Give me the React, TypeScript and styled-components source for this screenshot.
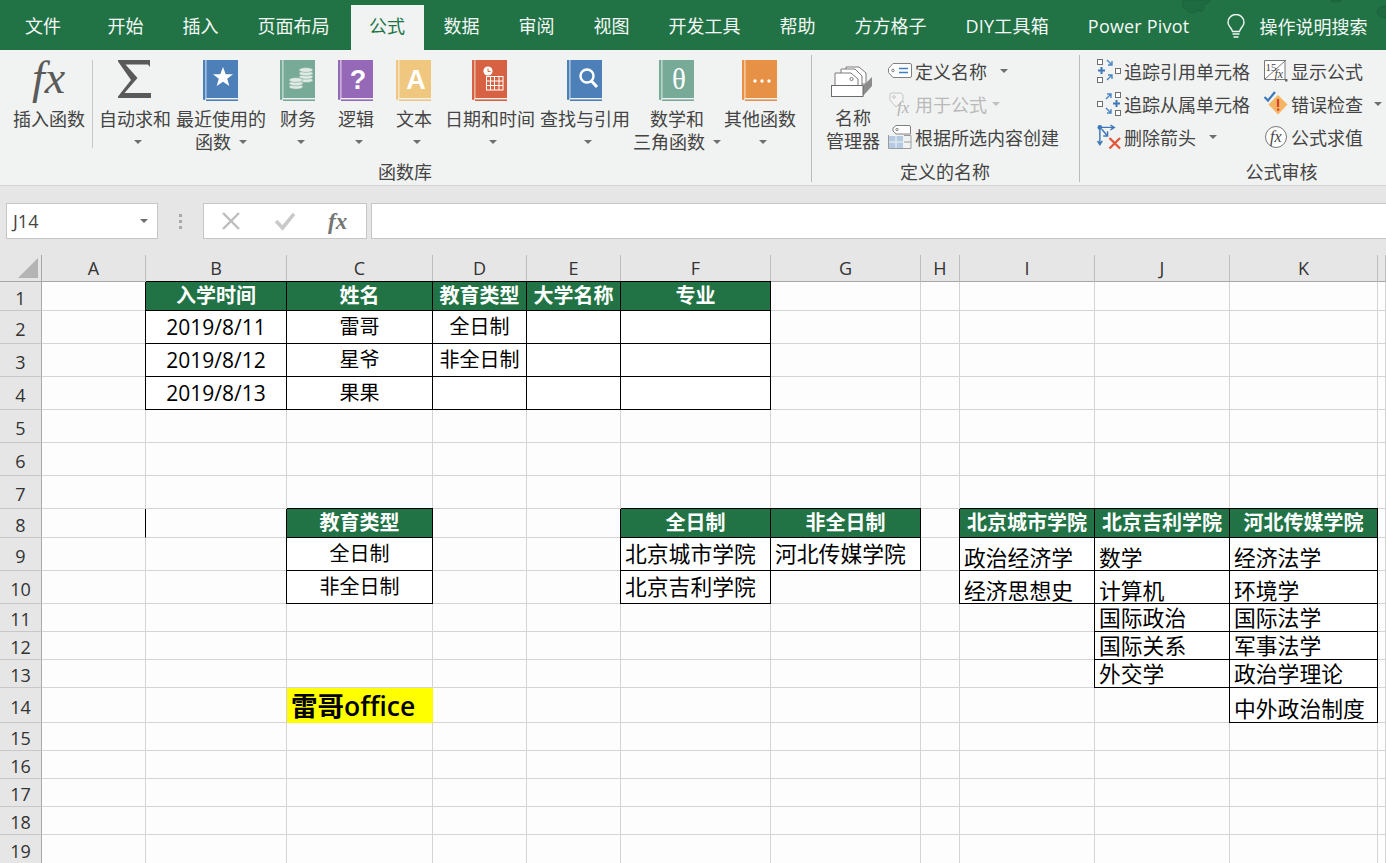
import React from "react";
import styled, { createGlobalStyle } from "styled-components";

const FONT = `"Open Sans", "Noto Sans CJK SC", sans-serif`;
const CJK = `"Noto Sans CJK SC", sans-serif`;
const GREEN = "#217346";

const GlobalStyle = createGlobalStyle`
  html, body { margin: 0; padding: 0; background: #e6e6e6; }
  body { font-family: ${FONT}; }
`;

const Page = styled.div`
  width: 1386px;
  height: 863px;
  overflow: hidden;
  display: flex;
  flex-direction: column;
  position: relative;
`;

/* tabs */
const TabBar = styled.div`
  height: 50px;
  background: ${GREEN};
  display: flex;
  align-items: flex-end;
  position: relative;
  flex: none;
`;

const Tab = styled.div<{ $active?: boolean; $first?: boolean; $spaced?: boolean }>`
  height: 45px;
  line-height: 43px;
  font-size: 18px;
  white-space: nowrap;
  color: ${(p) => (p.$active ? GREEN : "#f4f8f5")};
  background: ${(p) => (p.$active ? "#f1f3f2" : "transparent")};
  padding: ${(p) => (p.$first ? "0 27px 0 25px" : p.$active ? "0 19px 0 18px" : "0 19.5px")};
  margin-left: ${(p) => (p.$active ? "2px" : "0")};
  letter-spacing: ${(p) => (p.$spaced ? "0.2px" : "0")};
`;

const SearchHint = styled.div`
  height: 45px;
  box-sizing: border-box;
  padding-bottom: 3px;
  margin-left: 18.5px;
  display: flex;
  align-items: center;
  gap: 14px;
  font-size: 18px;
  color: #f4f8f5;
  white-space: nowrap;
`;

const Clover = styled.svg`
  position: absolute;
  top: 0;
  right: 0;
`;

/* ribbon */
const Ribbon = styled.div`
  height: 136px;
  flex: none;
  display: flex;
  background: #f1f3f2;
  border-bottom: 1px solid #d4d4d4;
  box-sizing: border-box;
  color: #444;
  font-family: ${CJK};
`;

const Group = styled.div<{ $w: number; $last?: boolean }>`
  width: ${(p) => p.$w}px;
  flex: none;
  display: flex;
  flex-direction: column;
  justify-content: space-between;
  position: relative;
  box-sizing: border-box;
  &::after {
    content: "";
    display: ${(p) => (p.$last ? "none" : "block")};
    position: absolute;
    right: 0;
    top: 5px;
    bottom: 3px;
    width: 1px;
    background: #b9bcbb;
  }
`;

const GroupBody = styled.div<{ $pad?: number; $gap?: number }>`
  display: flex;
  padding-left: ${(p) => p.$pad ?? 0}px;
  gap: ${(p) => p.$gap ?? 0}px;
`;

const GroupLabel = styled.div`
  height: 24px;
  line-height: 24px;
  margin-bottom: 2px;
  padding-right: 2px;
  text-align: center;
  font-size: 18px;
  color: #444;
`;

const BigButton = styled.div<{ $w: number; $ml?: number }>`
  width: ${(p) => p.$w}px;
  margin-left: ${(p) => p.$ml ?? 0}px;
  flex: none;
  padding-top: 10px;
  display: flex;
  flex-direction: column;
  align-items: center;
`;

const IconSlot = styled.div<{ $top?: number }>`
  height: 41px;
  display: flex;
  justify-content: center;
  align-items: flex-start;
  padding-right: 2px;
  margin-top: ${(p) => p.$top ?? 0}px;
`;

const BigLabel = styled.div<{ $top?: number }>`
  margin-top: ${(p) => p.$top ?? 6}px;
  font-size: 18px;
  line-height: 23px;
  text-align: center;
  white-space: nowrap;
  display: flex;
  flex-direction: column;
  align-items: center;
  height: 46px;
`;

const LabelLine = styled.div`
  height: 23px;
  display: flex;
  align-items: center;
  gap: 6px;
`;

const Caret = styled.span<{ $ml?: number; $muted?: boolean }>`
  display: inline-block;
  flex: none;
  margin-left: ${(p) => p.$ml ?? 0}px;
  width: 0;
  height: 0;
  border-left: 4px solid transparent;
  border-right: 4px solid transparent;
  border-top: 4px solid ${(p) => (p.$muted ? "#c0c0c0" : "#6e6e6e")};
`;

const VRule = styled.div`
  width: 1px;
  height: 88px;
  margin-top: 10px;
  background: #c6c8c7;
  flex: none;
`;

const SmallColumn = styled.div<{ $ml?: number }>`
  margin-left: ${(p) => p.$ml ?? 0}px;
  padding-top: 4px;
  display: flex;
  flex-direction: column;
`;

const SmallRow = styled.div<{ $muted?: boolean }>`
  height: 33px;
  display: flex;
  align-items: center;
  font-size: 18px;
  white-space: nowrap;
  color: ${(p) => (p.$muted ? "#b9b9b9" : "#444")};
`;

const SmallIcon = styled.div`
  width: 24px;
  height: 28px;
  margin-right: 3px;
  display: flex;
  align-items: center;
  justify-content: center;
  flex: none;
`;

/* formula bar */
const FormulaBar = styled.div`
  height: 69px;
  flex: none;
  background: #e6e6e6;
  box-sizing: border-box;
  padding: 17px 0 0 6px;
  display: flex;
  align-items: flex-start;
`;

const barBox = `
  height: 36px;
  box-sizing: border-box;
  background: #fff;
  border: 1px solid #c6c6c6;
`;

const NameBox = styled.div`
  ${barBox}
  width: 152px;
  display: flex;
  align-items: center;
  justify-content: space-between;
  padding: 0 9px 0 6px;
  font-size: 18px;
  color: #444;
`;

const Grip = styled.div`
  width: 45px;
  height: 36px;
  display: flex;
  flex-direction: column;
  align-items: center;
  justify-content: center;
  gap: 3px;
  flex: none;
  span {
    width: 3px;
    height: 3px;
    background: #a9a9a9;
  }
`;

const FxBox = styled.div`
  ${barBox}
  width: 164px;
  display: flex;
  align-items: center;
  padding-left: 17px;
  gap: 34px;
  flex: none;
`;

const FormulaInput = styled.div`
  ${barBox}
  margin-left: 4px;
  flex: 1;
  border-right: none;
`;

const FxMark = styled.span`
  font-family: "Liberation Serif", serif;
  font-style: italic;
  font-weight: 700;
  font-size: 23px;
  line-height: 1;
  color: #757575;
  margin-left: -1px;
`;

/* sheet */
const COLS = [104, 141, 146, 94, 94, 150, 150, 39, 135, 135, 148, 8];
const ROWS = [29, 33, 33, 33, 33, 33, 33, 29, 33, 33, 28, 28, 28, 35, 28, 28, 28, 28, 29];
const COL_NAMES = ["A", "B", "C", "D", "E", "F", "G", "H", "I", "J", "K", ""];

const Sheet = styled.div`
  flex: 1;
  display: grid;
  grid-template-columns: 42px ${COLS.map((c) => `${c}px`).join(" ")};
  grid-template-rows: 27px ${ROWS.map((r) => `${r}px`).join(" ")};
  background: #fdfdfd;
  font-family: ${FONT};
`;

const Corner = styled.div`
  background: #e6e6e6;
  border-right: 1px solid #a8a8a8;
  border-bottom: 1px solid #a8a8a8;
  box-sizing: border-box;
  display: flex;
  align-items: flex-end;
  justify-content: flex-end;
  padding: 0 3px 3px 0;
`;

const ColHead = styled.div`
  background: #e6e6e6;
  border-right: 1px solid #bdbdbd;
  border-bottom: 1px solid #a8a8a8;
  box-sizing: border-box;
  display: flex;
  align-items: center;
  justify-content: center;
  font-size: 18px;
  color: #333;
`;

const RowHead = styled.div`
  background: #e6e6e6;
  border-right: 1px solid #a8a8a8;
  border-bottom: 1px solid #c8c8c8;
  box-sizing: border-box;
  display: flex;
  align-items: center;
  justify-content: center;
  padding-top: 3px;
  font-size: 18px;
  color: #333;
`;

type CellKind = "plain" | "head" | "box" | "mark";

const Cell = styled.div<{ $kind: CellKind; $left?: boolean; $low?: number; $size?: number; $edge?: boolean }>`
  box-sizing: border-box;
  min-width: 0;
  overflow: visible;
  white-space: nowrap;
  display: flex;
  align-items: center;
  justify-content: ${(p) => (p.$left ? "flex-start" : "center")};
  padding: ${(p) => (p.$low ?? 0) * 2}px 0 0 ${(p) => (p.$left ? 4 : 0)}px;
  font-size: ${(p) => p.$size ?? 20}px;
  line-height: 1;
  font-weight: ${(p) => (p.$kind === "head" || p.$kind === "mark" ? 700 : 400)};
  color: ${(p) => (p.$kind === "head" ? "#fff" : "#000")};
  background: ${(p) =>
    p.$kind === "head" ? GREEN : p.$kind === "mark" ? "#ffff00" : p.$kind === "box" ? "#fff" : "transparent"};
  border-right: 1px solid ${(p) => (p.$kind === "head" || p.$kind === "box" || p.$edge ? "#000" : p.$kind === "mark" ? "#ffff00" : "#d4d4d4")};
  border-bottom: 1px solid ${(p) => (p.$kind === "head" || p.$kind === "box" ? "#000" : p.$kind === "mark" ? "#ffff00" : "#d4d4d4")};
  box-shadow: ${(p) => (p.$kind === "head" || p.$kind === "box" ? "-1px 0 0 #000, 0 -1px 0 #000" : "none")};
`;

const DateText = styled.span`
  font-size: 21px;
`;

const Mark = styled.span`
  font-family: ${FONT};
  font-weight: 600;
  font-size: 26.5px;
`;

type CellDef = { t?: string; k?: CellKind; left?: boolean; low?: number; size?: number };

const head = (t: string): CellDef => ({ t, k: "head" });
const box = (t = ""): CellDef => ({ t, k: "box" });
const wide = (t: string, low = 0): CellDef => ({ t, k: "box", left: true, size: 21.8, low });

const CELLS: Record<string, CellDef> = {
  B1: head("入学时间"),
  C1: head("姓名"),
  D1: head("教育类型"),
  E1: head("大学名称"),
  F1: head("专业"),
  B2: box("2019/8/11"),
  C2: box("雷哥"),
  D2: box("全日制"),
  E2: box(),
  F2: box(),
  B3: box("2019/8/12"),
  C3: box("星爷"),
  D3: box("非全日制"),
  E3: box(),
  F3: box(),
  B4: box("2019/8/13"),
  C4: box("果果"),
  D4: box(),
  E4: box(),
  F4: box(),
  C8: head("教育类型"),
  C9: box("全日制"),
  C10: box("非全日制"),
  F8: head("全日制"),
  G8: head("非全日制"),
  F9: wide("北京城市学院"),
  G9: wide("河北传媒学院"),
  F10: wide("北京吉利学院"),
  I8: head("北京城市学院"),
  J8: head("北京吉利学院"),
  K8: head("河北传媒学院"),
  I9: wide("政治经济学", 4),
  I10: wide("经济思想史", 4),
  J9: wide("数学", 4),
  J10: wide("计算机", 4),
  J11: wide("国际政治"),
  J12: wide("国际关系"),
  J13: wide("外交学"),
  K9: wide("经济法学", 4),
  K10: wide("环境学", 4),
  K11: wide("国际法学"),
  K12: wide("军事法学"),
  K13: wide("政治学理论"),
  K14: wide("中外政治制度", 4),
};

/* icons */
const Book: React.FC<{ color: string; children?: React.ReactNode }> = ({ color, children }) => (
  <svg width="35" height="41" viewBox="0 0 35 41">
    <rect x="0" y="0" width="35" height="38" fill={color} />
    <rect x="0" y="0" width="2.4" height="40" rx="1" fill={color} />
    <rect x="2.4" y="0" width="1" height="38" fill="#fff" opacity="0.8" />
    <rect x="3" y="39.4" width="32" height="1.6" fill={color} />
    {children}
  </svg>
);

const Coins: React.FC<{ x: number; y: number; n: number }> = ({ x, y, n }) => (
  <g fill="#dfeae5" stroke="#7aa897" strokeWidth="0.6">
    {Array.from({ length: n }).map((_, i) => (
      <ellipse key={i} cx={x} cy={y + (n - 1 - i) * 3.4} rx="7" ry="2.4" />
    ))}
  </g>
);

const SigmaIcon = () => (
  <svg width="33" height="38" viewBox="0 0 33 38">
    <path d="M0 0H32V7L30 4.5H7.5L19.5 18L6.5 33H33V38H0V36.5L13 20L0 1.5Z" fill="#5a5a5a" />
  </svg>
);

const BigFx = () => (
  <svg width="38" height="44" viewBox="0 0 38 44" overflow="visible">
    <text x="3" y="33" fontFamily="Liberation Serif, serif" fontStyle="italic" fontSize="46" fill="#5a5a5a">
      fx
    </text>
  </svg>
);

const NameManagerIcon = () => (
  <svg width="42" height="31" viewBox="0 0 42 31">
    <g fill="#fff" stroke="#7a7a7a" strokeWidth="1">
      <path d="M15 1H28L35 7V18H15Z" />
      <path d="M10 3H24L31 10V20H10Z" />
      <path d="M4 7H20L27 13V20H4Z" />
    </g>
    <circle cx="20.5" cy="13" r="1.6" fill="#fff" stroke="#7a7a7a" />
    <path d="M32 20L41 11V20L32 30Z" fill="#8b8b8b" />
    <rect x="0.5" y="19.5" width="31.5" height="11" fill="#fff" stroke="#6b6b6b" />
  </svg>
);

const TagIcon = () => (
  <svg width="24" height="15" viewBox="0 0 24 15">
    <path d="M5 .5H22A1.5 1.5 0 0 1 23.5 2V13A1.5 1.5 0 0 1 22 14.5H5L.5 9.5V5.5Z" fill="#fff" stroke="#808080" />
    <circle cx="5" cy="7.5" r="1.3" fill="none" stroke="#808080" />
    <path d="M11 5.5H20M11 9.5H20" stroke="#3f7fc0" strokeWidth="1.3" />
  </svg>
);

const UseInFormulaIcon = () => (
  <svg width="24" height="24" viewBox="0 0 24 24">
    <path d="M3 1H13L15 3V8L8 15L2 8V2Z" fill="#f4f4f4" stroke="#c4c4c4" />
    <circle cx="6" cy="5" r="1.3" fill="none" stroke="#c4c4c4" />
    <text x="9" y="21" fontFamily="Liberation Serif, serif" fontStyle="italic" fontSize="17" fill="#b4b4b4">
      fx
    </text>
  </svg>
);

const CreateFromSelectionIcon = () => (
  <svg width="24" height="25" viewBox="0 0 24 25">
    <path d="M8 1.5H21A1.5 1.5 0 0 1 22.5 3V10H8L5 7V4Z" fill="#fff" stroke="#808080" />
    <circle cx="9" cy="5.5" r="1.2" fill="none" stroke="#808080" />
    <rect x="1" y="12" width="6.5" height="5.5" fill="#b5cbe3" />
    <rect x="1" y="18.5" width="6.5" height="5.5" fill="#b5cbe3" />
    <rect x="8.5" y="12" width="6.5" height="5.5" fill="#b5cbe3" />
    <rect x="8.5" y="18.5" width="6.5" height="5.5" fill="#b5cbe3" />
    <path d="M16 11.5H23V24.5H.5V11" fill="none" stroke="#9c9c9c" />
    <path d="M16 18H23" stroke="#9c9c9c" />
  </svg>
);

const Square: React.FC<{ x: number; y: number }> = ({ x, y }) => (
  <rect x={x + 0.5} y={y + 0.5} width="5" height="5" fill="#fff" stroke="#6f6f6f" />
);

const TracePrecedentsIcon: React.FC<{ flip?: boolean }> = ({ flip }) => (
  <svg width="24" height="24" viewBox="0 0 24 24">
    <g transform={flip ? "translate(24 0) scale(-1 1)" : undefined}>
      <Square x={0} y={0} />
      <Square x={0} y={18} />
      <Square x={18} y={9} />
      <path d="M4.5 8V15M1 11.5H8" stroke="#3f78b8" strokeWidth="2" />
      <g stroke="#4a86c5" strokeWidth="1.4" fill="none">
        <path d={flip ? "M15 7L10 2M10 6V2H14" : "M10 1L15 6M15 2V6H11"} />
        <path d={flip ? "M15 16L10 21M10 17V21H14" : "M10 21L15 16M11 16H15V20"} />
      </g>
    </g>
  </svg>
);

const RemoveArrowsIcon = () => (
  <svg width="25" height="26" viewBox="0 0 25 26">
    <circle cx="3" cy="3" r="2.5" fill="#3f78b8" />
    <g stroke="#3f78b8" strokeWidth="1.5" fill="none">
      <path d="M3 3H18M14 .5L18 3L14 5.5" />
      <path d="M3 4V21M.5 17L3 21L5.5 17" />
      <path d="M5 5L11 12M11 7V12H6.5" />
    </g>
    <path d="M13 14L24 25M24 14L13 25" stroke="#e0573a" strokeWidth="2.4" />
  </svg>
);

const ShowFormulaIcon = () => (
  <svg width="24" height="24" viewBox="0 0 24 24">
    <path d="M22 1.5H.5V20.5H21V2" fill="#fff" stroke="#777" />
    <path d="M1 20L21 2" stroke="#777" />
    <text x="1.5" y="11.5" fontFamily="Liberation Serif, serif" fontSize="11" fill="#444">
      15
    </text>
    <text x="10.5" y="19" fontFamily="Liberation Serif, serif" fontStyle="italic" fontSize="12" fill="#444">
      fx
    </text>
    <rect x="21" y="20" width="2.5" height="2.5" fill="#666" />
  </svg>
);

const ErrorCheckIcon = () => (
  <svg width="24" height="25" viewBox="0 0 24 25">
    <path d="M14 4L23.5 13.5L14 23.5L4.5 13.5Z" fill="#f3b562" />
    <path d="M0.5 6L4 9.5L11 1" fill="none" stroke="#3d78b8" strokeWidth="2.2" />
    <path d="M14 8V16" stroke="#d8432e" strokeWidth="2.2" />
    <rect x="13" y="17.5" width="2.2" height="2.2" fill="#d8432e" />
  </svg>
);

const EvaluateIcon = () => (
  <svg width="24" height="24" viewBox="0 0 24 24">
    <circle cx="12" cy="12" r="10.5" fill="#fff" stroke="#777" />
    <text x="6" y="17" fontFamily="Liberation Serif, serif" fontStyle="italic" fontSize="16" fill="#444">
      fx
    </text>
  </svg>
);

const BulbIcon = () => (
  <svg width="18" height="25" viewBox="0 0 18 25">
    <path
      d="M5.5 17.5C5 14 1 12.5 1 8.5A8 8 0 0 1 17 8.5C17 12.5 13 14 12.5 17.5Z"
      fill="none"
      stroke="#f4f8f5"
      strokeWidth="1.4"
    />
    <path d="M5.5 20H12.5M6.5 23H11.5" stroke="#f4f8f5" strokeWidth="1.6" />
  </svg>
);

const CancelIcon = () => (
  <svg width="20" height="20" viewBox="0 0 20 20">
    <path d="M2 2L18 18M18 2L2 18" stroke="#bdbdbd" strokeWidth="2.4" />
  </svg>
);

const ConfirmIcon = () => (
  <svg width="20" height="20" viewBox="0 0 20 20">
    <path d="M1 10L7.5 17L19 3" fill="none" stroke="#c9c9c9" strokeWidth="3.6" />
  </svg>
);

/* ribbon data */
const TABS = ["开始", "插入", "页面布局"];
const TABS_AFTER = ["数据", "审阅", "视图", "开发工具", "帮助", "方方格子"];
const TABS_LATIN = ["DIY工具箱", "Power Pivot"];

type Big = { w: number; ml?: number; icon: React.ReactNode; lines: string[] };

const LIBRARY: Big[] = [
  {
    w: 84,
    icon: <SigmaIcon />,
    lines: ["自动求和"],
  },
  {
    w: 88,
    icon: (
      <Book color="#4d80b9">
        <path d="M20 7L22.7 14.2H30L24.2 18.7L26.3 26L20 21.7L13.7 26L15.8 18.7L10 14.2H17.3Z" fill="#fff" />
      </Book>
    ),
    lines: ["最近使用的", "函数"],
  },
  {
    w: 66,
    icon: (
      <Book color="#78aa98">
        <Coins x={26} y={10} n={4} />
        <Coins x={16} y={20} n={3} />
      </Book>
    ),
    lines: ["财务"],
  },
  {
    w: 50,
    icon: (
      <Book color="#9668b8">
        <text x="20" y="29" textAnchor="middle" fontFamily="Liberation Sans, sans-serif" fontWeight="700" fontSize="27" fill="#fff">
          ?
        </text>
      </Book>
    ),
    lines: ["逻辑"],
  },
  {
    w: 66,
    icon: (
      <Book color="#efc77e">
        <text x="20" y="29" textAnchor="middle" fontFamily="Liberation Sans, sans-serif" fontWeight="700" fontSize="27" fill="#fff">
          A
        </text>
      </Book>
    ),
    lines: ["文本"],
  },
  {
    w: 86,
    icon: (
      <Book color="#d66243">
        <rect x="14.5" y="16.5" width="16.5" height="13.5" fill="none" stroke="#fff" />
        <path d="M14.5 21H31M14.5 25.5H31M18.5 16.5V30M22.5 16.5V30M27 16.5V30" stroke="#fff" />
        <circle cx="16" cy="11" r="4.6" fill="#fff" />
        <path d="M16 8.5V11.5H18.5" fill="none" stroke="#d66243" />
      </Book>
    ),
    lines: ["日期和时间"],
  },
  {
    w: 104,
    icon: (
      <Book color="#4d80b9">
        <circle cx="20" cy="16" r="6.5" fill="none" stroke="#fff" strokeWidth="2.4" />
        <path d="M24.5 21L30 27" stroke="#fff" strokeWidth="3" />
      </Book>
    ),
    lines: ["查找与引用"],
  },
  {
    w: 80,
    icon: (
      <Book color="#78aa98">
        <text x="20" y="29" textAnchor="middle" fontFamily="Liberation Serif, serif" fontSize="29" fill="#fff">
          θ
        </text>
      </Book>
    ),
    lines: ["数学和", "三角函数"],
  },
  {
    w: 98,
    ml: -6,
    icon: (
      <Book color="#e79146">
        <circle cx="13" cy="21" r="1.7" fill="#fff" />
        <circle cx="20" cy="21" r="1.7" fill="#fff" />
        <circle cx="27" cy="21" r="1.7" fill="#fff" />
      </Book>
    ),
    lines: ["其他函数"],
  },
];

const BigLabelBlock: React.FC<{ lines: string[] }> = ({ lines }) => (
  <BigLabel>
    <LabelLine>{lines[0]}</LabelLine>
    <LabelLine>
      {lines[1]}
      <Caret $ml={lines[1] ? 2 : 5} />
    </LabelLine>
  </BigLabel>
);

export default function App() {
  const cells: React.ReactNode[] = [];
  ROWS.forEach((_, r) => {
    const rowNo = r + 1;
    cells.push(<RowHead key={`h${rowNo}`}>{rowNo}</RowHead>);
    COL_NAMES.forEach((c, i) => {
      const def = CELLS[`${c}${rowNo}`] ?? {};
      const isDate = def.t?.startsWith("2019");
      if (c === "C" && rowNo === 14) {
        cells.push(
          <Cell key="mark" $kind="mark" $left $low={1}>
            <Mark>雷哥office</Mark>
          </Cell>
        );
        return;
      }
      cells.push(
        <Cell
          key={`${i}-${rowNo}`}
          $kind={def.k ?? "plain"}
          $left={def.left}
          $low={def.low}
          $size={def.size}
          $edge={c === "A" && rowNo === 8}
        >
          {isDate ? <DateText>{def.t}</DateText> : def.t}
        </Cell>
      );
    });
  });

  return (
    <Page>
      <GlobalStyle />
      <TabBar>
        <Tab $first>文件</Tab>
        {TABS.map((t) => (
          <Tab key={t}>{t}</Tab>
        ))}
        <Tab $active>公式</Tab>
        {TABS_AFTER.map((t) => (
          <Tab key={t}>{t}</Tab>
        ))}
        {TABS_LATIN.map((t) => (
          <Tab key={t} $spaced>
            {t}
          </Tab>
        ))}
        <SearchHint>
          <BulbIcon />
          操作说明搜索
        </SearchHint>
        <Clover width="210" height="50" viewBox="0 0 210 50">
          <g fill="#1f6b41" stroke="#1c633c">
            <path d="M7 0C8 5 4 8 10 9C12 14 19 14 21 10C27 14 29 8 27 5C31 4 34 2 34 0Z" />
            <path d="M154 0C157 3 163 3 166 0Z" />
            <path d="M204 7C200 10 201 15 206 17L210 18V6Z" />
          </g>
        </Clover>
      </TabBar>

      <Ribbon>
        <Group $w={812}>
          <GroupBody $pad={6}>
            <BigButton $w={86}>
              <IconSlot>
                <BigFx />
              </IconSlot>
              <BigLabel>
                <LabelLine>插入函数</LabelLine>
              </BigLabel>
            </BigButton>
            <VRule />
            {LIBRARY.map((b) => (
              <BigButton key={b.lines[0]} $w={b.w} $ml={b.ml}>
                <IconSlot>{b.icon}</IconSlot>
                <BigLabelBlock lines={b.lines} />
              </BigButton>
            ))}
          </GroupBody>
          <GroupLabel>函数库</GroupLabel>
        </Group>

        <Group $w={268}>
          <GroupBody $pad={6}>
            <BigButton $w={70}>
              <IconSlot $top={6}>
                <NameManagerIcon />
              </IconSlot>
              <BigLabel $top={-1}>
                <LabelLine>名称</LabelLine>
                <LabelLine>管理器</LabelLine>
              </BigLabel>
            </BigButton>
            <SmallColumn>
              <SmallRow>
                <SmallIcon>
                  <TagIcon />
                </SmallIcon>
                定义名称
                <Caret $ml={13} />
              </SmallRow>
              <SmallRow $muted>
                <SmallIcon>
                  <UseInFormulaIcon />
                </SmallIcon>
                用于公式
                <Caret $ml={5} $muted />
              </SmallRow>
              <SmallRow>
                <SmallIcon>
                  <CreateFromSelectionIcon />
                </SmallIcon>
                根据所选内容创建
              </SmallRow>
            </SmallColumn>
          </GroupBody>
          <GroupLabel>定义的名称</GroupLabel>
        </Group>

        <Group $w={405} $last>
          <GroupBody $pad={17} $gap={14}>
            <SmallColumn>
              <SmallRow>
                <SmallIcon>
                  <TracePrecedentsIcon />
                </SmallIcon>
                追踪引用单元格
              </SmallRow>
              <SmallRow>
                <SmallIcon>
                  <TracePrecedentsIcon flip />
                </SmallIcon>
                追踪从属单元格
              </SmallRow>
              <SmallRow>
                <SmallIcon>
                  <RemoveArrowsIcon />
                </SmallIcon>
                删除箭头
                <Caret $ml={13} />
              </SmallRow>
            </SmallColumn>
            <SmallColumn>
              <SmallRow>
                <SmallIcon>
                  <ShowFormulaIcon />
                </SmallIcon>
                显示公式
              </SmallRow>
              <SmallRow>
                <SmallIcon>
                  <ErrorCheckIcon />
                </SmallIcon>
                错误检查
                <Caret $ml={11} />
              </SmallRow>
              <SmallRow>
                <SmallIcon>
                  <EvaluateIcon />
                </SmallIcon>
                公式求值
              </SmallRow>
            </SmallColumn>
          </GroupBody>
          <GroupLabel>公式审核</GroupLabel>
        </Group>
      </Ribbon>

      <FormulaBar>
        <NameBox>
          J14
          <Caret />
        </NameBox>
        <Grip>
          <span />
          <span />
          <span />
        </Grip>
        <FxBox>
          <CancelIcon />
          <ConfirmIcon />
          <FxMark>fx</FxMark>
        </FxBox>
        <FormulaInput />
      </FormulaBar>

      <Sheet>
        <Corner>
          <svg width="20" height="20" viewBox="0 0 20 20">
            <path d="M20 0V20H0Z" fill="#b4b4b4" />
          </svg>
        </Corner>
        {COL_NAMES.map((c, i) => (
          <ColHead key={i}>{c}</ColHead>
        ))}
        {cells}
      </Sheet>
    </Page>
  );
}
